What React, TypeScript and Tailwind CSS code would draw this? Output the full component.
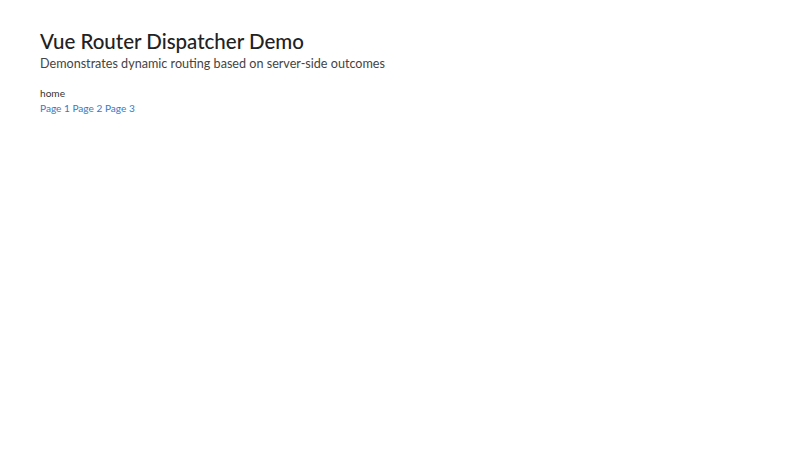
export default function App() {
  return (
    <div className="min-h-screen bg-white px-10 pt-[27px] text-[#333] font-['Lato',sans-serif]">
      <h1 className="text-[20.5px] leading-[28px] font-medium text-[#222]">Vue Router Dispatcher Demo</h1>
      <p className="text-[12.6px] leading-[18px] text-[#444]">Demonstrates dynamic routing based on server-side outcomes</p>
      <div className="mt-[13px] text-[10.1px] leading-[15px] text-[#333]">home</div>
      <nav className="text-[10.1px] leading-[15px] text-[#3b78c2]">
        <a href="#">Page 1</a> <a href="#">Page 2</a> <a href="#">Page 3</a>
      </nav>
    </div>
  );
}
